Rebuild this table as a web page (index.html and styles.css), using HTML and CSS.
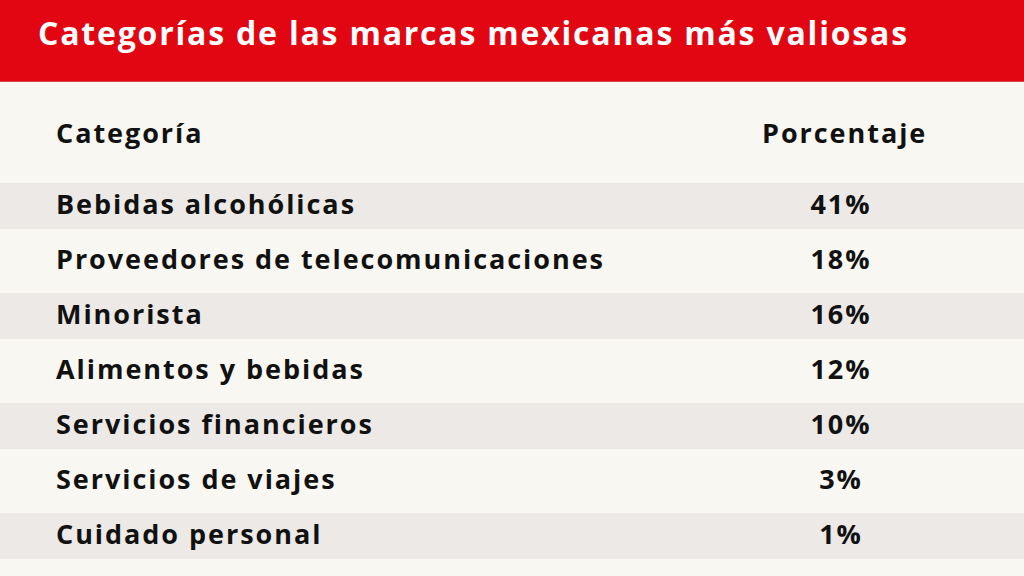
FILE: index.html
```html
<!DOCTYPE html>
<html lang="es">
<head>
<meta charset="utf-8">
<title>Categorías de las marcas mexicanas más valiosas</title>
<link rel="stylesheet" href="styles.css">
</head>
<body>
<div class="page">
  <header class="banner">
    <h1 class="title">Categorías de las marcas mexicanas más valiosas</h1>
  </header>
  <section class="table">
    <div class="row head">
      <span class="cat">Categoría</span>
      <span class="pct">Porcentaje</span>
    </div>
    <div class="rows">
      <div class="row alt"><span class="cat">Bebidas alcohólicas</span><span class="pct">41%</span></div>
      <div class="row"><span class="cat">Proveedores de telecomunicaciones</span><span class="pct">18%</span></div>
      <div class="row alt"><span class="cat">Minorista</span><span class="pct">16%</span></div>
      <div class="row"><span class="cat">Alimentos y bebidas</span><span class="pct">12%</span></div>
      <div class="row alt"><span class="cat">Servicios financieros</span><span class="pct">10%</span></div>
      <div class="row"><span class="cat">Servicios de viajes</span><span class="pct">3%</span></div>
      <div class="row alt"><span class="cat">Cuidado personal</span><span class="pct">1%</span></div>
    </div>
  </section>
</div>
</body>
</html>
```
FILE: styles.css
```css
* { box-sizing: border-box; }
html, body { margin: 0; padding: 0; }
body {
  width: 1024px;
  height: 576px;
  overflow: hidden;
  background: #f9f7f1;
  font-family: "Open Sans", "Liberation Sans", sans-serif;
  color: #111;
}
.page { display: flex; flex-direction: column; height: 576px; }
.banner {
  height: 82px;
  background: #e20613;
  border-bottom: 1px solid #d84a4a;
  padding: 13px 0 0 38px;
}
.title {
  margin: 0;
  font-size: 32px;
  font-weight: 700;
  color: #fff;
  line-height: 40px;
  letter-spacing: 1.8px;
}
.table { display: flex; flex-direction: column; }
.row {
  display: flex;
  align-items: center;
  height: 46px;
  padding: 0 0 5px 56px;
  font-size: 27px;
  font-weight: 700;
  letter-spacing: 1.95px;
}
.row.head { height: 101px; padding-bottom: 0; }
.rows { display: flex; flex-direction: column; gap: 9px; }
.row.alt { background: #ece9e6; }
.cat { flex: 0 0 700px; }
.pct { flex: 0 0 170px; text-align: center; }
.row.head .pct { padding-left: 6px; }
```
